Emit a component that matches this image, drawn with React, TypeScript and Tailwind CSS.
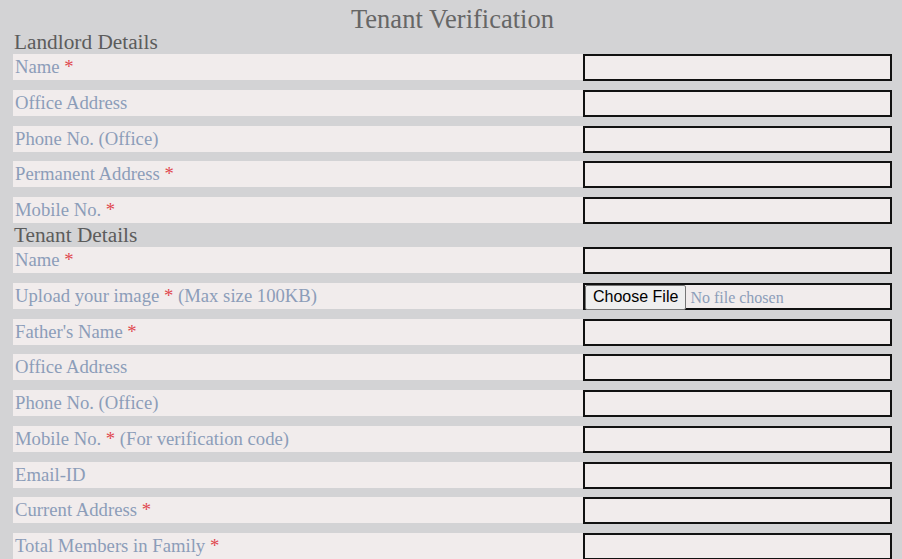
import React from 'react';

type Field = { label: string; required?: boolean; note?: string; file?: boolean };

const landlord: Field[] = [
  { label: 'Name', required: true },
  { label: 'Office Address' },
  { label: 'Phone No. (Office)' },
  { label: 'Permanent Address', required: true },
  { label: 'Mobile No.', required: true },
];

const tenant: Field[] = [
  { label: 'Name', required: true },
  { label: 'Upload your image', required: true, note: '(Max size 100KB)', file: true },
  { label: "Father's Name", required: true },
  { label: 'Office Address' },
  { label: 'Phone No. (Office)' },
  { label: 'Mobile No.', required: true, note: '(For verification code)' },
  { label: 'Email-ID' },
  { label: 'Current Address', required: true },
  { label: 'Total Members in Family', required: true },
];

const Row = ({ f }: { f: Field }) => (
  <div className="flex h-[26px] bg-[#f1ecec]">
    <div className="flex-1 pl-[2px] text-[18.7px] leading-[26px] text-[#8c9db9] whitespace-nowrap">
      {f.label}
      {f.required && <span className="text-[#e0474f]"> *</span>}
      {f.note && <span> {f.note}</span>}
    </div>
    {f.file ? (
      <div className="flex items-center w-[309px] h-[27px] border-2 border-[#111] bg-[#f1ecec]">
        <button className="h-[25px] mt-[2px] px-[7px] bg-[#efefef] border border-[#767676] rounded-[2px] text-[16px] leading-[20px] text-black font-['Liberation_Sans',Arial,sans-serif]">
          Choose File
        </button>
        <span className="ml-[4px] mt-[3px] text-[16px] text-[#8c9db9]">No file chosen</span>
      </div>
    ) : (
      <input className="w-[309px] h-[27px] border-2 border-[#111] bg-[#f1ecec] outline-none" />
    )}
  </div>
);

const Section = ({ title, fields }: { title: string; fields: Field[] }) => (
  <div className="flex flex-col">
    <h2 className="h-[24px] pl-[1px] text-[21.3px] leading-[24px] text-[#5c5c5c]">{title}</h2>
    <div className="flex flex-col gap-[9.75px]">
      {fields.map((f, i) => (
        <Row key={i} f={f} />
      ))}
    </div>
  </div>
);

export default function App() {
  return (
    <div className="min-h-[559px] bg-[#d3d3d5] font-['Liberation_Serif','Times_New_Roman',serif] pl-[13px] pr-[10px] overflow-hidden">
      <h1 className="h-[30px] pt-[4px] text-center text-[26.5px] leading-[30px] text-[#666]">Tenant Verification</h1>
      <Section title="Landlord Details" fields={landlord} />
      <Section title="Tenant Details" fields={tenant} />
    </div>
  );
}
